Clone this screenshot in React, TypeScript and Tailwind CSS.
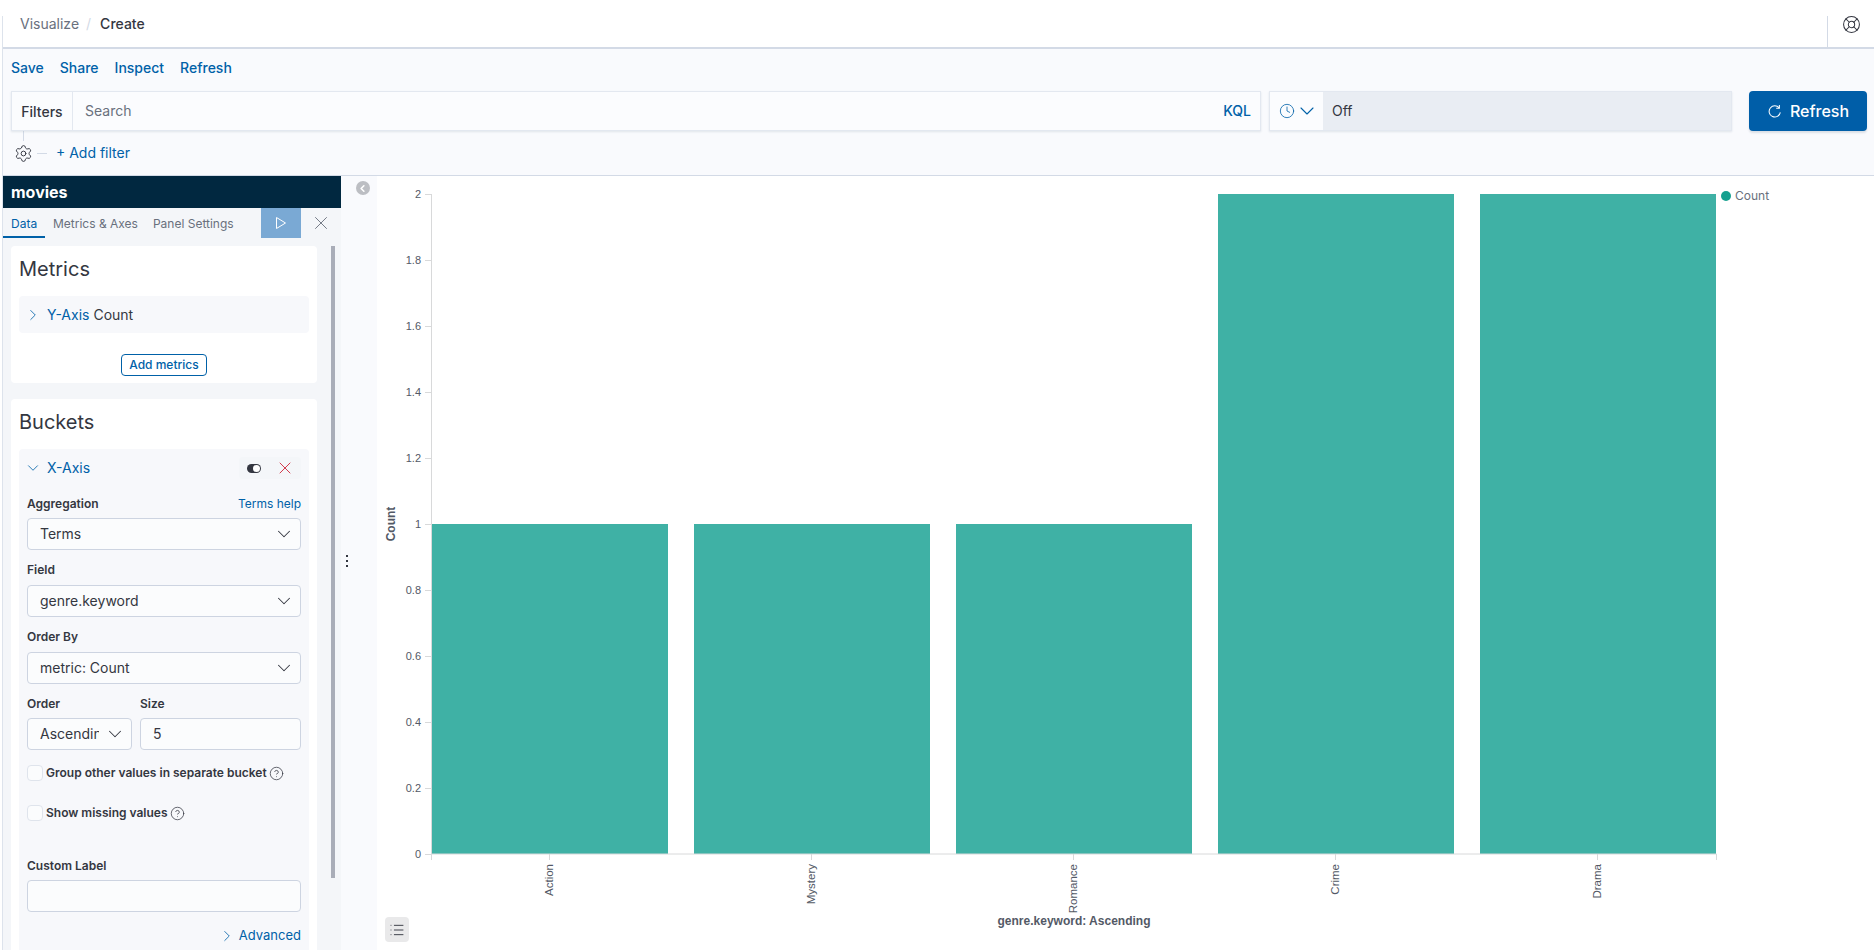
import React from "react";
import { Settings, LifeBuoy, Clock, ChevronDown, ChevronRight, ChevronLeft, X, CircleHelp, List } from "lucide-react";

const bars = [
  { x: 432, v: 1, name: "Action" },
  { x: 694, v: 1, name: "Mystery" },
  { x: 956, v: 1, name: "Romance" },
  { x: 1218, v: 2, name: "Crime" },
  { x: 1480, v: 2, name: "Drama" },
];
const yTicks = ["0", "0.2", "0.4", "0.6", "0.8", "1", "1.2", "1.4", "1.6", "1.8", "2"];

function Label({ children, right }: { children: React.ReactNode; right?: React.ReactNode }) {
  return (
    <div className="flex h-[14px] items-center justify-between text-xs font-semibold leading-[14px] text-[#343741]">
      <span>{children}</span>
      {right}
    </div>
  );
}

function SelectBox({ value, className = "" }: { value: string; className?: string }) {
  return (
    <div className={"flex h-8 items-center justify-between rounded-[4px] border border-[#cdd4e1] bg-[#fbfcfd] pl-[12px] pr-[5px] text-sm text-[#343741] " + className}>
      <span className="mr-[5px] overflow-hidden whitespace-nowrap">{value}</span>
      <ChevronDown size={22} strokeWidth={1.1} className="shrink-0 text-[#343741]" />
    </div>
  );
}

function CheckRow({ text, className = "" }: { text: string; className?: string }) {
  return (
    <div className={"flex h-4 items-center " + className}>
      <div className="h-4 w-4 rounded-[4px] border border-[#dfe4ec] bg-[#fbfcfd]" />
      <span className="ml-[3px] text-xs font-semibold text-[#343741]">{text}</span>
      <CircleHelp size={15} strokeWidth={1.2} className="ml-[2px] text-[#343741]" />
    </div>
  );
}

function Chart() {
  return (
    <svg viewBox="377 176 1497 774" className="h-full w-full" style={{ fontFamily: '"Liberation Sans", Arial, sans-serif' }}>
      {bars.map((b) => (
        <rect key={b.x} x={b.x} y={854 - 330 * b.v} width={236} height={330 * b.v} fill="#3fb1a5" />
      ))}
      <path d="M431.5 194V854M431.5 854H1716.5" stroke="#d8d9da" strokeWidth="1" fill="none" />
      {yTicks.map((t, i) => (
        <g key={t}>
          <line x1={425} x2={431} y1={854.5 - 66 * i} y2={854.5 - 66 * i} stroke="#d8d9da" />
          <text x={421} y={858 - 66 * i} textAnchor="end" fontSize="11" fill="#535966">{t}</text>
        </g>
      ))}
      <line x1={431.5} x2={431.5} y1={854} y2={860} stroke="#d8d9da" />
      <line x1={1716.5} x2={1716.5} y1={854} y2={860} stroke="#d8d9da" />
      {bars.map((b) => (
        <g key={b.name}>
          <line x1={b.x + 117.5} x2={b.x + 117.5} y1={854} y2={860} stroke="#d8d9da" />
          <text transform={`translate(${b.x + 121} 864) rotate(-90)`} textAnchor="end" fontSize="11.5" fill="#535966">{b.name}</text>
        </g>
      ))}
      <text transform="translate(395 524) rotate(-90)" textAnchor="middle" fontSize="12" fontWeight="700" fill="#535966">Count</text>
      <text x={1074} y={925} textAnchor="middle" fontSize="12" fontWeight="700" fill="#535966">genre.keyword: Ascending</text>
      <circle cx={1726} cy={196} r={5} fill="#16a08f" />
      <text x={1735} y={200} fontSize="12" fill="#69707d" style={{ fontFamily: "Inter, sans-serif" }}>Count</text>
    </svg>
  );
}

export default function App() {
  return (
    <div className="flex h-[950px] w-full overflow-hidden bg-white text-[#343741]" style={{ fontFamily: 'Inter, "Liberation Sans", sans-serif' }}>
      <div className="w-[3px] shrink-0 bg-white">
        <div className="ml-auto mt-4 h-full w-px bg-[#dde3ec]" />
      </div>
      <div className="flex min-w-0 flex-1 flex-col">
        <header className="flex h-[49px] shrink-0 border-b-2 border-[#d3dae6] bg-white">
          <div className="flex flex-1 items-start pl-[17px] pt-[15px] text-[14px] leading-[18px]">
            <span className="text-[#69707d]">Visualize</span>
            <span className="mx-[7px] text-[#d3dae6]">/</span>
            <span className="ml-[2px] font-medium text-[#343741]">Create</span>
          </div>
          <div className="mt-4 flex h-8 w-[47px] justify-center border-l border-[#d3dae6]">
            <LifeBuoy size={19} strokeWidth={1.3} className="-mt-[1.5px] ml-[1px] text-[#343741]" />
          </div>
        </header>

        <div className="h-[127px] shrink-0 border-b border-[#d3dae6] bg-[#f9fafd]">
          <nav className="flex h-[42px] items-center gap-[16px] pb-[5px] pl-[8px] text-sm font-medium text-[#0061a8]">
            <span>Save</span>
            <span>Share</span>
            <span>Inspect</span>
            <span>Refresh</span>
          </nav>
          <div className="flex pl-[8px]">
            <div className="flex h-[40px] w-[1250px] border border-[#e3e8f0] bg-[#fbfcfe] shadow-[0_1px_2px_rgba(152,162,179,0.25)]">
              <div className="flex w-[61px] items-center justify-center border-r border-[#e3e8f0] pt-[1px] text-sm font-medium text-[#343741]">Filters</div>
              <div className="flex flex-1 items-center justify-between pl-[12px] pr-[9px] text-sm">
                <span className="text-[#69707d]">Search</span>
                <span className="font-medium text-[#0061a8]">KQL</span>
              </div>
            </div>
            <div className="ml-[8px] flex h-[40px] w-[463px] border border-[#e3e8f0] bg-[#fbfcfe] shadow-[0_1px_2px_rgba(152,162,179,0.25)]">
              <div className="flex w-[53px] items-center pl-[9px] text-[#0061a8]">
                <Clock size={16} strokeWidth={1.2} />
                <ChevronDown size={24} strokeWidth={1.1} />
              </div>
              <div className="flex flex-1 items-center bg-[#e9edf3] pl-[9px] text-sm text-[#343741]">Off</div>
            </div>
            <button className="ml-[17px] flex h-[40px] w-[118px] items-center justify-center gap-[8px] rounded-[4px] bg-[#005ea8] text-base font-medium text-white shadow-[0_2px_2px_rgba(152,162,179,0.3)]">
              <svg width="15" height="15" viewBox="0 0 16 16" fill="none" stroke="currentColor" strokeWidth="1.1">
                <path d="M13 4.2A6 6 0 1 0 14.2 9" />
                <path d="M13.2 1v3.6H9.8" />
              </svg>
              Refresh
            </button>
          </div>
          <div className="ml-[20px] h-[10px] w-px bg-[#d3dae6]" />
          <div className="flex h-[24px] items-center pl-[11px]">
            <Settings size={19} strokeWidth={1.2} className="text-[#343741]" />
            <div className="ml-[4px] h-px w-[10px] bg-[#d3dae6]" />
            <span className="ml-[9px] text-sm text-[#0061a8]">+ Add filter</span>
          </div>
        </div>

        <div className="flex min-h-0 flex-1">
          <aside className="flex w-[338px] shrink-0 flex-col bg-[#f4f6f9]">
            <div className="flex h-8 shrink-0 items-center bg-[#012840] pb-[1px] pl-[8px] text-base font-bold text-white">movies</div>
            <div className="flex h-[30px] shrink-0 items-start text-xs leading-[31px] text-[#69707d]">
              <div className="h-[30px] w-[42px] border-b-2 border-[#0061a8] pl-[8px] text-[#0061a8]">Data</div>
              <span className="ml-[8px]">Metrics &amp; Axes</span>
              <span className="ml-[15px]">Panel Settings</span>
              <div className="ml-auto flex h-[30px] w-[40px] items-center justify-center bg-[#7aa9d4] text-white">
                <svg width="16" height="16" viewBox="0 0 16 16" fill="none" stroke="currentColor" strokeWidth="1">
                  <path d="M3.5 2.5v11l9-5.5z" />
                </svg>
              </div>
              <div className="ml-[11px] mr-[11px] flex h-[30px] w-[18px] items-center justify-center">
                <X size={22} strokeWidth={1} className="shrink-0 text-[#69707d]" />
              </div>
            </div>
            <div className="flex min-h-0 flex-1 overflow-hidden pl-[8px] pt-2">
              <div className="w-[306px] shrink-0">
                <section className="h-[137px] rounded-[4px] bg-white px-2">
                  <h2 className="pt-[8px] text-xl leading-[30px] text-[#343741]">Metrics</h2>
                  <div className="mt-[12px] flex h-[37px] items-center rounded-[4px] bg-[#f7f8fb] pl-[5px] text-sm">
                    <ChevronRight size={18} strokeWidth={1.1} className="text-[#0061a8]" />
                    <span className="ml-[5px] text-[#0061a8]">Y-Axis</span>
                    <span className="ml-1 text-[#343741]">Count</span>
                  </div>
                  <div className="mt-[21px] flex justify-center">
                    <button className="h-[22px] w-[86px] rounded-[4px] border border-[#0061a8] text-xs font-medium text-[#0061a8]">Add metrics</button>
                  </div>
                </section>
                <section className="mt-4 rounded-[4px] bg-white px-2">
                  <h2 className="pt-[8px] text-xl leading-[30px] text-[#343741]">Buckets</h2>
                  <div className="mt-[12px] h-[520px] rounded-[4px] bg-[#f7f8fb] px-2 pt-[8px]">
                    <div className="flex h-[22px] items-center">
                      <ChevronDown size={18} strokeWidth={1.1} className="-ml-[3px] text-[#0061a8]" />
                      <span className="ml-[5px] text-sm text-[#0061a8]">X-Axis</span>
                      <div className="ml-auto flex h-[22px] w-[62px] items-center rounded-[4px] bg-[#f4f6f9] pl-2">
                        <div className="relative h-[9px] w-[14px] rounded-full bg-[#343741]">
                          <div className="absolute right-[1px] top-[1px] h-[7px] w-[7px] rounded-full bg-white" />
                        </div>
                        <X size={20} strokeWidth={1.1} className="ml-[14px] text-[#cf2a3c]" />
                      </div>
                    </div>
                    <div className="mt-[18px]">
                      <Label right={<span className="font-normal text-[#0061a8]">Terms help</span>}>Aggregation</Label>
                      <SelectBox value="Terms" className="mt-[7px]" />
                    </div>
                    <div className="mt-[13px]">
                      <Label>Field</Label>
                      <SelectBox value="genre.keyword" className="mt-[8px]" />
                    </div>
                    <div className="mt-[13px]">
                      <Label>Order By</Label>
                      <SelectBox value="metric: Count" className="mt-[8px]" />
                    </div>
                    <div className="mt-[13px] flex gap-[8px]">
                      <div className="w-[105px]">
                        <Label>Order</Label>
                        <SelectBox value="Ascending" className="mt-[7px]" />
                      </div>
                      <div className="flex-1">
                        <Label>Size</Label>
                        <div className="mt-[7px] flex h-8 items-center rounded-[4px] border border-[#cdd4e1] bg-[#fbfcfd] pl-[12px] text-sm">5</div>
                      </div>
                    </div>
                    <CheckRow text="Group other values in separate bucket" className="mt-[15px]" />
                    <CheckRow text="Show missing values" className="mt-[24px]" />
                    <div className="mt-[38px]">
                      <Label>Custom Label</Label>
                      <div className="mt-[7px] h-8 rounded-[4px] border border-[#cdd4e1] bg-[#fbfcfd]" />
                    </div>
                    <div className="mt-[14px] flex items-center justify-end text-[13px] text-[#0061a8]">
                      <ChevronRight size={18} strokeWidth={1.1} />
                      <span className="ml-[3px]">Advanced</span>
                    </div>
                  </div>
                </section>
              </div>
              <div className="ml-[14px] h-[632px] w-[4px] bg-[#a9adb8]" />
            </div>
          </aside>

          <div className="flex w-[36px] shrink-0 flex-col items-start bg-[#f9fafd]">
            <div className="ml-[15px] mt-[5px] flex h-[14px] w-[14px] items-center justify-center rounded-full bg-[#bcbec3]">
              <ChevronLeft size={11} strokeWidth={3.5} className="-ml-[1px] text-white" />
            </div>
            <div className="ml-[5px] mt-[360px] flex flex-col gap-[3px]">
              <div className="h-[2px] w-[2px] bg-[#343741]" />
              <div className="h-[2px] w-[2px] bg-[#343741]" />
              <div className="h-[2px] w-[2px] bg-[#343741]" />
            </div>
          </div>

          <main className="relative min-w-0 flex-1 bg-white">
            <Chart />
            <button className="absolute bottom-[8px] left-[8px] flex h-[25px] w-[24px] items-center justify-center rounded-[4px] bg-[#e9e9ea]">
              <List size={16} strokeWidth={1.4} className="text-[#343741]" />
            </button>
          </main>
        </div>
      </div>
    </div>
  );
}
